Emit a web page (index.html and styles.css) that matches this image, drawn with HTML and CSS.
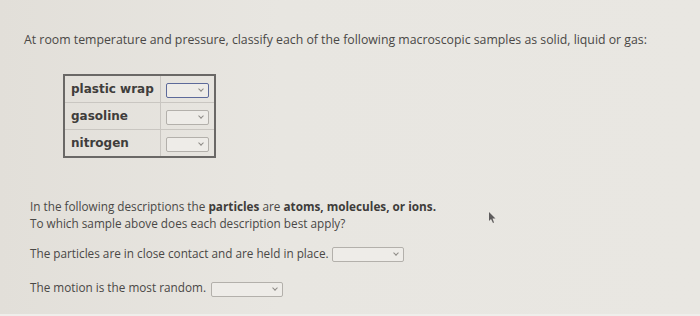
FILE: index.html
```html
<!DOCTYPE html>
<html lang="en">
  <head>
    <meta charset="UTF-8">
    <title>Classify samples</title>
    <link rel="stylesheet" href="styles.css">
  </head>
  <body>
    <div class="question">
      <p class="prompt">At room temperature and pressure, classify each of the following macroscopic samples as solid, liquid or gas:</p>

      <table class="samples">
        <tr>
          <td class="name">plastic wrap</td>
          <td class="pick"><span class="select focused"></span></td>
        </tr>
        <tr>
          <td class="name">gasoline</td>
          <td class="pick"><span class="select"></span></td>
        </tr>
        <tr>
          <td class="name">nitrogen</td>
          <td class="pick"><span class="select"></span></td>
        </tr>
      </table>

      <div class="describe">
        <p class="intro">In the following descriptions the <b>particles</b> are <b>atoms, molecules, or ions.</b><br>
          To which sample above does each description best apply?</p>
        <p class="line">The particles are in close contact and are held in place. <span class="select wide"></span></p>
        <p class="line">The motion is the most random. <span class="select wide"></span></p>
      </div>
    </div>

    <!-- mouse pointer caught in the shot -->
    <svg class="pointer" width="8" height="12" viewBox="0 0 8 12">
      <path d="M1 0 L1 9 L3 7 L5 11 L6 10.5 L4.5 6.5 L7.5 6.5 Z" fill="#3c3a3c"/>
    </svg>
  </body>
</html>
```

FILE: styles.css
```css
html, body {
  margin: 0;
  padding: 0;
}

body {
  position: relative;
  width: 700px;
  height: 316px;
  overflow: hidden;
  background: linear-gradient(90deg, #e2dfd9 0%, #e8e6e1 40%, #e9e7e2 100%);
  font-family: "Open Sans", "Liberation Sans", sans-serif;
  color: #4a4846;
  border-bottom: 2px solid #efeeeb;
  box-sizing: border-box;
}

.question {
  padding: 31px 0 0 24px;
}

.prompt {
  margin: 0;
  font-size: 12.3px;
  line-height: 18px;
}

.samples {
  margin: 25px 0 0 39px;
  border-collapse: collapse;
  border: 2px solid #6a6866;
}

.samples td {
  height: 26px;
  padding: 0;
  border-top: 1px solid #c9c6c1;
}

.samples .name {
  font-family: "DejaVu Sans", Verdana, sans-serif;
  font-weight: bold;
  font-size: 12px;
  color: #3f3d3b;
  padding: 0 6px 0 6px;
  border-right: 1px solid #c9c6c1;
}

.samples .pick {
  padding: 0 5px 0 5px;
}

.select {
  display: inline-block;
  position: relative;
  width: 41px;
  height: 13px;
  border: 1px solid #b3b0ab;
  border-radius: 2px;
  background: #eeece8;
  vertical-align: middle;
}

.select::after {
  content: "";
  position: absolute;
  right: 5px;
  top: 3px;
  width: 3px;
  height: 3px;
  border-right: 1px solid #8d8a86;
  border-bottom: 1px solid #8d8a86;
  transform: rotate(45deg);
}

.select.focused {
  border: 1.5px solid #5d6a9a;
}

.select.wide {
  width: 70px;
}

.describe {
  margin: 40px 0 0 6px;
  font-size: 11.75px;
}

.describe p {
  margin: 0;
}

.describe b {
  color: #3e3c3a;
}

.intro {
  line-height: 17px;
}

.line {
  margin-top: 13px !important;
  line-height: 17px;
}

.line + .line {
  margin-top: 17px !important;
}

.line + .line .select {
  margin-left: 2px;
}

.pointer {
  position: absolute;
  left: 488px;
  top: 212px;
  opacity: 0.8;
}
```
